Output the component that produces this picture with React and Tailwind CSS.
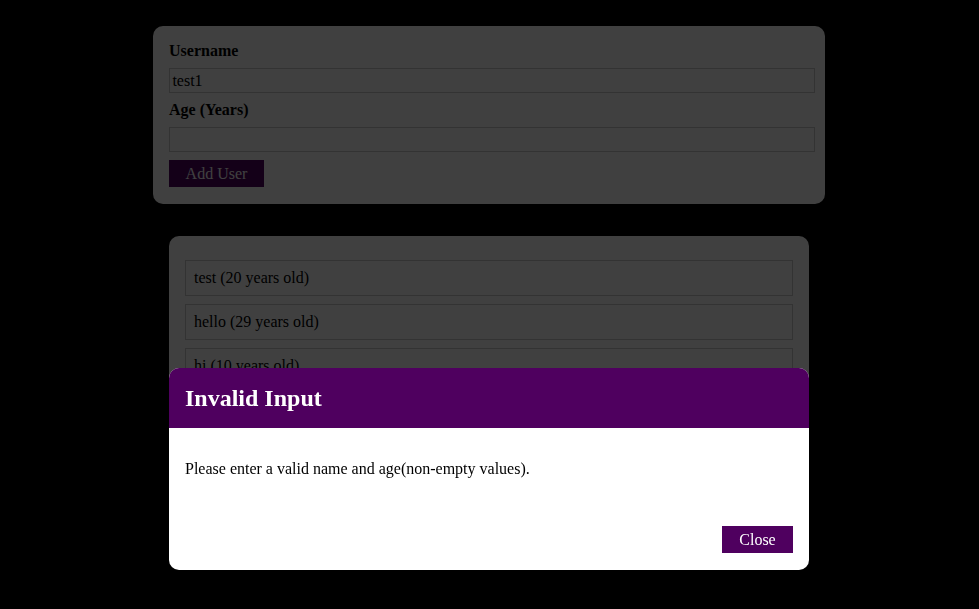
const users = [
  { id: 'u1', name: 'test', age: 20 },
  { id: 'u2', name: 'hello', age: 29 },
  { id: 'u3', name: 'hi', age: 10 }
];

function Card({ className, children }) {
  return <div className={`rounded-[10px] bg-white ${className}`}>{children}</div>;
}

function AddUser() {
  return (
    <Card className="mx-auto w-[672px] px-4 pb-[17px] pt-4">
      <form className="flex flex-col">
        <label htmlFor="username" className="mb-2 block font-bold leading-[18px]">
          Username
        </label>
        <input
          id="username"
          type="text"
          defaultValue="test1"
          className="mb-2 block h-[25px] w-[646px] border border-[#ccc] px-[2.4px] text-base leading-[18px] outline-none"
        />
        <label htmlFor="age" className="mb-2 block font-bold leading-[18px]">
          Age (Years)
        </label>
        <input
          id="age"
          type="number"
          className="mb-2 block h-[25px] w-[646px] border border-[#ccc] px-[2.4px] text-base leading-[18px] outline-none"
        />
        <button
          type="button"
          className="h-[27px] w-[95px] border border-[#4f005f] bg-[#4f005f] text-base leading-[18px] text-white"
        >
          Add User
        </button>
      </form>
    </Card>
  );
}

function UsersList() {
  return (
    <Card className="mx-auto mt-8 w-[640px] px-4 py-6">
      <ul className="flex flex-col gap-2">
        {users.map(user => (
          <li key={user.id} className="h-9 border border-[#ccc] px-2 py-2 leading-[18px]">
            {user.name} ({user.age} years old)
          </li>
        ))}
      </ul>
    </Card>
  );
}

function ErrorModal() {
  return (
    <>
      <div className="fixed inset-0 z-10 bg-black/75" />
      <div className="fixed left-[169px] top-[368px] z-20 w-[640px] overflow-hidden rounded-[10px] bg-white">
        <header className="h-[60px] bg-[#4f005f] p-4">
          <h2 className="text-2xl font-bold leading-[28px] text-white">Invalid Input</h2>
        </header>
        <div className="p-4">
          <p className="my-4 leading-[18px]">Please enter a valid name and age(non-empty values).</p>
        </div>
        <footer className="flex justify-end px-4 pb-[17px] pt-4">
          <button
            type="button"
            className="h-[27px] w-[71px] border border-[#4f005f] bg-[#4f005f] text-base leading-[18px] text-white"
          >
            Close
          </button>
        </footer>
      </div>
    </>
  );
}

export default function App() {
  return (
    <div className="h-[609px] overflow-hidden bg-black font-['Liberation_Serif',serif] text-base text-black">
      <main className="w-[978px] pt-[26px]">
        <AddUser />
        <UsersList />
      </main>
      <ErrorModal />
    </div>
  );
}
